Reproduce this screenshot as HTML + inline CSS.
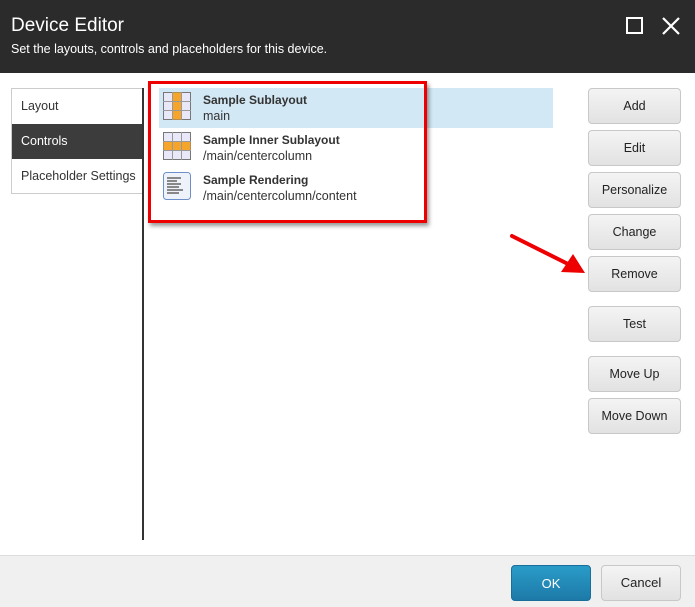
<!DOCTYPE html>
<html><head><style>
*{box-sizing:border-box;margin:0;padding:0}
body{width:695px;height:607px;position:relative;background:#fff;font-family:"Liberation Sans","DejaVu Sans",sans-serif;overflow:hidden;color:#222}
.hdr{position:absolute;left:0;top:0;width:695px;height:73px;background:#2b2b2b;color:#fff}
.hdr h1{position:absolute;left:11px;top:15px;font-size:19px;font-weight:normal}
.hdr p{position:absolute;left:11px;top:42px;font-size:12.5px}
.tabs{position:absolute;left:11px;top:88px;width:131px;height:106px;border:1px solid #ccc;border-right:none}
.tab{height:35px;line-height:35px;padding-left:9px;font-size:12.5px;color:#333}
.tab.sel{background:#3c3c3c;color:#fff}
.vl{position:absolute;left:142px;top:88px;width:2px;height:452px;background:#333}
.row{position:absolute;left:159px;width:394px;height:40px}
.row.sel{background:#d2e8f4}
.row .t{position:absolute;left:44px;top:5px;font-size:12px;font-weight:bold;color:#333}
.row .s{position:absolute;left:44px;top:21px;font-size:12.5px;color:#333}
.row svg{position:absolute;left:4px;top:4px}
.box{position:absolute;left:148px;top:81px;width:279px;height:142px;border:3px solid #e00;box-shadow:2px 3px 4px rgba(0,0,0,.4)}
.btn{position:absolute;left:588px;width:93px;height:36px;border:1px solid #c8c8c8;border-radius:4px;background:linear-gradient(#f4f4f4,#e2e2e2);font-size:12.5px;text-align:center;line-height:34px;color:#222}
.ftr{position:absolute;left:0;top:555px;width:695px;height:52px;background:#f0f0f0;border-top:1px solid #ddd}
.ok{position:absolute;left:511px;top:565px;width:80px;height:36px;border-radius:4px;background:linear-gradient(#2a9cc8,#1d7aa8);color:#fff;font-size:13px;text-align:center;line-height:36px;border:1px solid #1a6f9a}
.cn{position:absolute;left:601px;top:565px;width:80px;height:36px;border-radius:4px;border:1px solid #c8c8c8;background:linear-gradient(#f4f4f4,#e2e2e2);font-size:13px;text-align:center;line-height:34px}
</style></head><body>
<div class="hdr"><h1>Device Editor</h1><p>Set the layouts, controls and placeholders for this device.</p>
<svg style="position:absolute;left:626px;top:17px" width="18" height="18"><rect x="1" y="1" width="15" height="15" fill="none" stroke="#fff" stroke-width="2"/></svg>
<svg style="position:absolute;left:661px;top:16px" width="20" height="20"><path d="M2 2L18 18M18 2L2 18" stroke="#fff" stroke-width="2.2"/></svg>
</div>
<div class="tabs"><div class="tab">Layout</div><div class="tab sel">Controls</div><div class="tab">Placeholder Settings</div></div>
<div class="vl"></div>
<div class="row sel" style="top:88px"><svg width="28" height="28"><rect x="0.5" y="0.5" width="27" height="27" fill="#e8e8f8" stroke="#777"/><rect x="9.5" y="0.5" width="9" height="27" fill="#f6a52c"/><path d="M9.5 0v28M18.5 0v28M0 9.5h28M0 18.5h28" stroke="#999"/></svg><div class="t">Sample Sublayout</div><div class="s">main</div></div>
<div class="row" style="top:128px"><svg width="28" height="28"><rect x="0.5" y="0.5" width="27" height="27" fill="#e8e8f8" stroke="#777"/><rect x="0.5" y="9.5" width="27" height="9" fill="#f6a52c"/><path d="M9.5 0v28M18.5 0v28M0 9.5h28M0 18.5h28" stroke="#999"/></svg><div class="t">Sample Inner Sublayout</div><div class="s">/main/centercolumn</div></div>
<div class="row" style="top:168px"><svg width="28" height="28"><rect x="0.5" y="0.5" width="27" height="27" rx="3" fill="#eef3fb" stroke="#6f8fc8"/><path d="M4 6h14M4 9h10M4 12h14M4 15h12M4 18h16M4 21h12" stroke="#888" stroke-width="2"/></svg><div class="t">Sample Rendering</div><div class="s">/main/centercolumn/content</div></div>
<div class="box"></div>
<div class="btn" style="top:88px">Add</div>
<div class="btn" style="top:130px">Edit</div>
<div class="btn" style="top:172px">Personalize</div>
<div class="btn" style="top:214px">Change</div>
<div class="btn" style="top:256px">Remove</div>
<div class="btn" style="top:306px">Test</div>
<div class="btn" style="top:356px">Move Up</div>
<div class="btn" style="top:398px">Move Down</div>
<svg style="position:absolute;left:505px;top:228px" width="85" height="55"><path d="M7 8L65 37" stroke="#e00" stroke-width="4" stroke-linecap="round"/><path d="M80 45L56 44L68 26Z" fill="#e00"/></svg>
<div class="ftr"></div>
<div class="ok">OK</div><div class="cn">Cancel</div>
</body></html>
